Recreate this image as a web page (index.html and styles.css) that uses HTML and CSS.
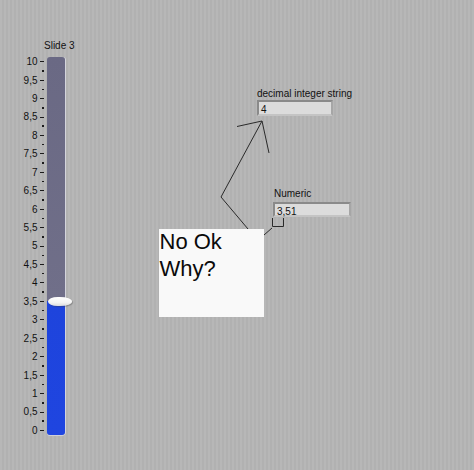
FILE: index.html
```html
<!DOCTYPE html>
<html>
<head>
<meta charset="utf-8">
<link rel="stylesheet" href="styles.css">
</head>
<body>
<div class="panel">
  <div class="slide-label">Slide 3</div>
  <div class="scale">
    <div class="major"><span class="num">10</span><span class="dash"></span></div>
    <div class="minor"><span class="dot"></span></div>
    <div class="major"><span class="num">9,5</span><span class="dash"></span></div>
    <div class="minor"><span class="dot"></span></div>
    <div class="major"><span class="num">9</span><span class="dash"></span></div>
    <div class="minor"><span class="dot"></span></div>
    <div class="major"><span class="num">8,5</span><span class="dash"></span></div>
    <div class="minor"><span class="dot"></span></div>
    <div class="major"><span class="num">8</span><span class="dash"></span></div>
    <div class="minor"><span class="dot"></span></div>
    <div class="major"><span class="num">7,5</span><span class="dash"></span></div>
    <div class="minor"><span class="dot"></span></div>
    <div class="major"><span class="num">7</span><span class="dash"></span></div>
    <div class="minor"><span class="dot"></span></div>
    <div class="major"><span class="num">6,5</span><span class="dash"></span></div>
    <div class="minor"><span class="dot"></span></div>
    <div class="major"><span class="num">6</span><span class="dash"></span></div>
    <div class="minor"><span class="dot"></span></div>
    <div class="major"><span class="num">5,5</span><span class="dash"></span></div>
    <div class="minor"><span class="dot"></span></div>
    <div class="major"><span class="num">5</span><span class="dash"></span></div>
    <div class="minor"><span class="dot"></span></div>
    <div class="major"><span class="num">4,5</span><span class="dash"></span></div>
    <div class="minor"><span class="dot"></span></div>
    <div class="major"><span class="num">4</span><span class="dash"></span></div>
    <div class="minor"><span class="dot"></span></div>
    <div class="major"><span class="num">3,5</span><span class="dash"></span></div>
    <div class="minor"><span class="dot"></span></div>
    <div class="major"><span class="num">3</span><span class="dash"></span></div>
    <div class="minor"><span class="dot"></span></div>
    <div class="major"><span class="num">2,5</span><span class="dash"></span></div>
    <div class="minor"><span class="dot"></span></div>
    <div class="major"><span class="num">2</span><span class="dash"></span></div>
    <div class="minor"><span class="dot"></span></div>
    <div class="major"><span class="num">1,5</span><span class="dash"></span></div>
    <div class="minor"><span class="dot"></span></div>
    <div class="major"><span class="num">1</span><span class="dash"></span></div>
    <div class="minor"><span class="dot"></span></div>
    <div class="major"><span class="num">0,5</span><span class="dash"></span></div>
    <div class="minor"><span class="dot"></span></div>
    <div class="major"><span class="num">0</span><span class="dash"></span></div>
  </div>
  <div class="track"></div>
  <div class="thumb"></div>

  <div class="ctl ctl-string">
    <div class="ctl-label">decimal integer string</div>
    <div class="ctl-box box-string">4</div>
  </div>

  <div class="ctl ctl-numeric">
    <div class="ctl-label">Numeric</div>
    <div class="ctl-box box-numeric">3,51</div>
  </div>

  <div class="note">No Ok<br>Why?</div>

  <svg class="lines" width="474" height="470" viewBox="0 0 474 470">
    <g stroke="#2a2a2a" stroke-width="1" fill="none">
      <path d="M237 126.5 L262 121"/>
      <path d="M262 121 L269 153"/>
      <path d="M262 121 L221 197 L248 229"/>
      <path d="M264 235 L272 228"/>
      <path d="M272.5 218 L272.5 226.5 L283.5 226.5 L283.5 218"/>
    </g>
  </svg>
</div>
</body>
</html>
```

FILE: styles.css
```css
html, body {
  margin: 0;
  padding: 0;
}
body {
  width: 474px;
  height: 470px;
  overflow: hidden;
  font-family: "Liberation Sans", Arial, sans-serif;
  background: repeating-linear-gradient(90deg, #b7b7b7 0 2px, #b1b1b1 2px 4px);
}
.panel {
  position: relative;
  width: 474px;
  height: 470px;
}
.slide-label {
  position: absolute;
  left: 44px;
  top: 40px;
  font-size: 10px;
  line-height: 12px;
  color: #111;
}
.scale {
  position: absolute;
  left: 0;
  top: 57.1px;
  width: 46px;
  display: flex;
  flex-direction: column;
}
.major, .minor {
  height: 9.225px;
  display: flex;
  align-items: center;
}
.num {
  width: 37.5px;
  text-align: right;
  font-size: 10px;
  line-height: 9.225px;
  color: #111;
}
.dash {
  width: 4px;
  height: 1px;
  margin-left: 2px;
  background: #1a1a1a;
}
.dot {
  width: 1.5px;
  height: 1.5px;
  margin-left: 42px;
  background: #1a1a1a;
}
.track {
  position: absolute;
  left: 47px;
  top: 57px;
  width: 18px;
  height: 378px;
  border-radius: 3px;
  background: linear-gradient(180deg, #6a6984 0, #706f89 244px, #1e44dc 244px, #1f45e0 100%);
  box-shadow: 1px 0 0 #d4d4dc, 0 1px 0 #cfcfd8;
}
.thumb {
  position: absolute;
  left: 48px;
  top: 296.5px;
  width: 24px;
  height: 9px;
  border-radius: 40% 50% 50% 40% / 50%;
  background: linear-gradient(180deg, #ffffff 0, #f4f4f4 60%, #dcdcdc 100%);
  box-shadow: 1px 1px 1px rgba(60, 60, 60, 0.35);
}
.ctl {
  position: absolute;
  display: flex;
  flex-direction: column;
}
.ctl-string {
  left: 257px;
  top: 87.5px;
}
.ctl-numeric {
  left: 273px;
  top: 188px;
}
.ctl-label {
  font-size: 10px;
  line-height: 12px;
  color: #111;
}
.ctl-numeric .ctl-label {
  margin-left: 1px;
  margin-bottom: 2px;
}
.ctl-box {
  box-sizing: border-box;
  font-size: 10px;
  line-height: 11px;
  color: #111;
  background: #dcdcdc;
  border-top: 2px solid #8a8a8a;
  border-left: 2px solid #8a8a8a;
  border-right: 2px solid #a6a6a6;
  border-bottom: 2px solid #c4c4c4;
  padding-left: 2px;
}
.box-string {
  width: 76px;
  height: 16px;
  margin-top: 0.5px;
  padding-top: 2px;
}
.box-numeric {
  width: 78px;
  height: 15px;
  padding-top: 2px;
}
.note {
  position: absolute;
  left: 159px;
  top: 229px;
  width: 105px;
  height: 88px;
  box-sizing: border-box;
  background: #f9f9f9;
  font-size: 22px;
  line-height: 26.7px;
  color: #0a0a0a;
  padding-left: 0.5px;
}
.lines {
  position: absolute;
  left: 0;
  top: 0;
  pointer-events: none;
}
```
